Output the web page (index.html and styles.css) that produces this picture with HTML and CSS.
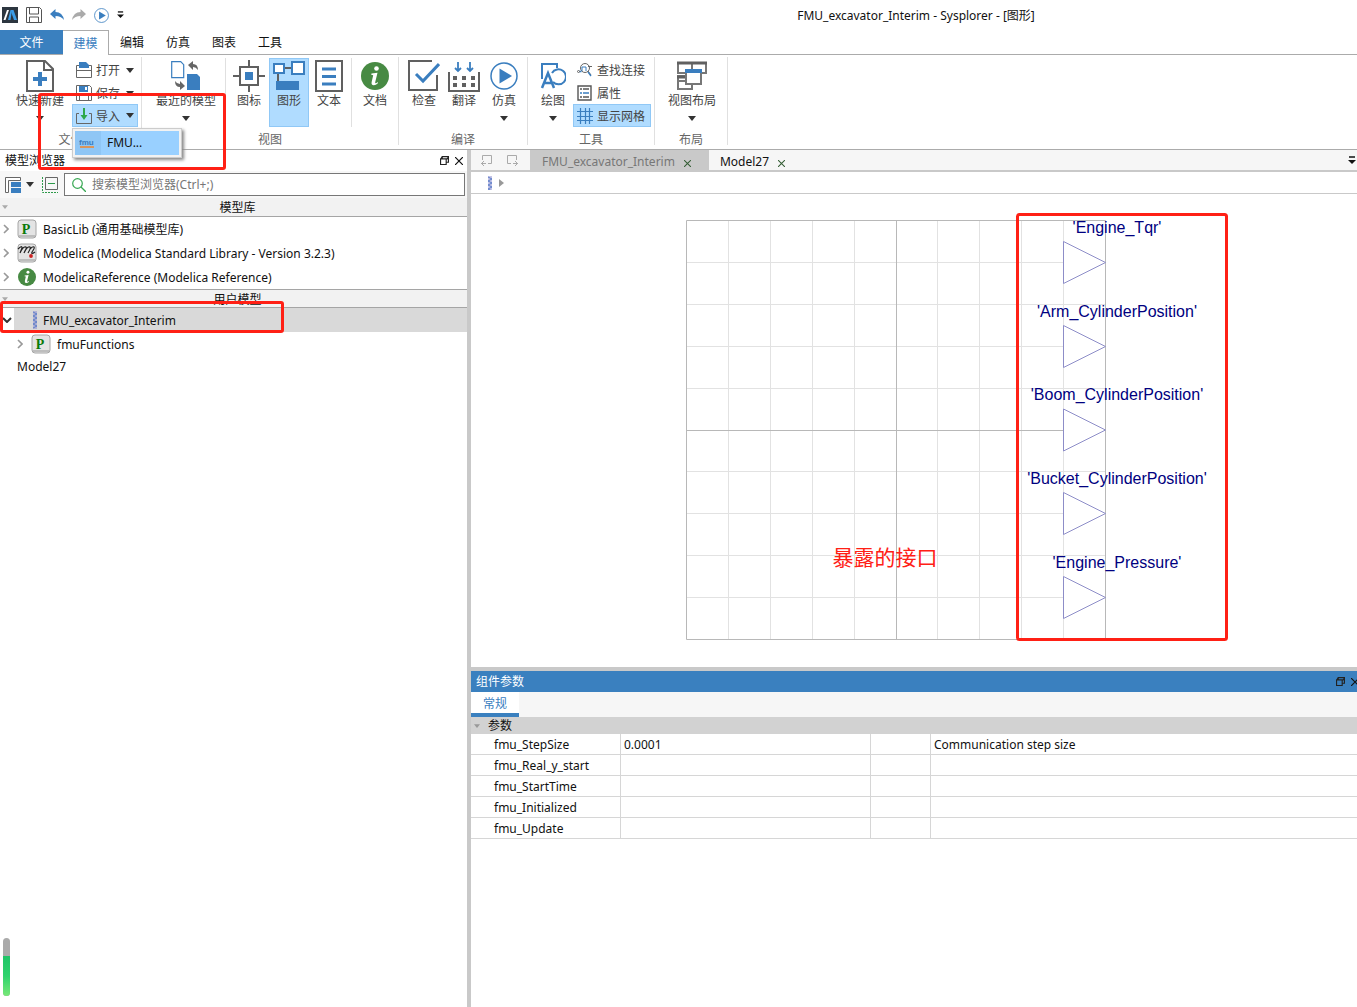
FILE: index.html
```html
<!DOCTYPE html>
<html lang="zh-CN">
<head>
<meta charset="utf-8">
<title>FMU_excavator_Interim - Sysplorer</title>
<link rel="stylesheet" href="styles.css">
</head>
<body>
<svg class="defs" aria-hidden="true">
  <symbol id="package" viewBox="0 0 20 20"><rect x="1" y="1" width="18" height="18" rx="3" fill="#e4e4e4" stroke="#a6a6a6"/><path d="M2 17h16" stroke="#bdbdbd" stroke-width="2"/></symbol>
  <symbol id="info" viewBox="0 0 28 28"><circle cx="14" cy="14" r="14" fill="#478a43"/><circle cx="15.500" cy="6.500" r="2.300" fill="#fff"/><path d="M10.500 11.500l6-.8-2.300 9.500q-.2 1.300.8 1l2-1.200-.3 1.600q-2 1.800-4 1.700-2.800-.3-2-3.600l1.500-6.500-2-.4z" fill="#fff"/></symbol>
  <symbol id="chain" viewBox="0 0 4 18"><path d="M1 0v18M3 0v18" stroke="#8a8ad0"/><path d="M0 1l4 2-4 2 4 2-4 2 4 2-4 2 4 2-4 2" fill="none" stroke="#5f7fc8"/></symbol>
  <symbol id="arrow" viewBox="0 0 8 5"><path d="M0 0h8L4 5z" fill="#333"/></symbol>
  <symbol id="chevron" viewBox="0 0 6 10"><path d="M1 1l4 4-4 4" fill="none" stroke="#999" stroke-width="1.600"/></symbol>
  <symbol id="float" viewBox="0 0 8 8"><path d="M.5 2.500h5v5h-5zM2 2V.5h5.500v5H6M1 2l1-1.500M6 3l1.500-2" fill="none" stroke="#222"/></symbol>
  <symbol id="close" viewBox="0 0 8 8"><path d="M0 0l8 8M8 0L0 8" fill="none" stroke="currentColor" stroke-width="1.200"/></symbol>
  <symbol id="overflow" viewBox="0 0 8 9"><path d="M1 1h6" stroke="#111" stroke-width="1.500"/><path d="M0 4h8L4 8z" fill="#111"/></symbol>
  <symbol id="disk" viewBox="0 0 16 16"><path d="M.5.5h13l2 2v13H.5z" fill="#fff" stroke="#555"/><path d="M3.500 1v6h9V1M3.500 15v-5h9v5" fill="none" stroke="#555"/></symbol>
  <symbol id="play" viewBox="0 0 28 28"><circle cx="14" cy="14" r="13" fill="#fff" stroke="#3a7ebf" stroke-width="1.500"/><path d="M9.500 6.500v15L22 14z" fill="#3a7ebf"/></symbol>
</svg>

<header class="titlebar">
  <nav class="quick">
    <svg width="16" height="16" viewBox="0 0 16 16"><path d="M0 0h16v16H0z" fill="#2c3640"/><path d="M1.500 13L5 3h2L3.500 13z" fill="#fff"/><path d="M9 3h2.500L15 13h-3L9.500 6z" fill="#3b9de8"/><path d="M6 13L8.500 3H10L8.500 13z" fill="#3b9de8"/></svg>
    <button aria-label="保存"><svg width="16" height="16"><use href="#disk"/></svg></button>
    <button aria-label="撤销"><svg width="14" height="12" viewBox="0 0 14 12"><path d="M0 5l5.500-5v3q7 0 8.500 8-3-4-8.500-4v3z" fill="#3a7ebf"/></svg></button>
    <button aria-label="重做"><svg width="14" height="12" viewBox="0 0 14 12"><path d="M14 5L8.500 0v3Q1.500 3 0 11q3-4 8.500-4v3z" fill="#aaa"/></svg></button>
    <button aria-label="仿真"><svg width="15" height="15"><use href="#play"/></svg></button>
    <button aria-label="自定义"><svg width="7" height="8"><use href="#overflow"/></svg></button>
  </nav>
  <h1>FMU_excavator_Interim - Sysplorer - [图形]</h1>
</header>

<nav class="menu">
  <button class="file">文件</button><button class="current">建模</button><button>编辑</button><button>仿真</button><button>图表</button><button>工具</button>
</nav>

<section class="ribbon">
  <div class="group">
    <div class="tools file-tools">
      <button class="big wide"><svg width="28" height="32" viewBox="0 0 28 32"><path d="M1 1h18l8 8v22H1z" fill="#fff" stroke="#606060" stroke-width="2"/><path d="M18 1v9h9" fill="none" stroke="#606060" stroke-width="2"/><path d="M14 12v14M7 19h14" stroke="#3a7ebf" stroke-width="4"/></svg><span>快速新建</span><svg class="drop"><use href="#arrow"/></svg></button>
      <div class="stack">
        <button><svg width="16" height="16" viewBox="0 0 16 16"><path d="M3 3.500H.5v12h15v-12H13M.5 8.500h15" fill="none" stroke="#666"/><path d="M3 6V0h7l3 3v3z" fill="#3a7ebf"/></svg><span>打开</span><svg class="drop"><use href="#arrow"/></svg></button>
        <button><svg width="16" height="16" viewBox="0 0 16 16"><path d="M.5.5h13l2 2v13H.5zM3.500 15v-5h9v5" fill="none" stroke="#666"/><path d="M3 1h9v6H3z" fill="#3a7ebf"/><path d="M9 2h2v3H9z" fill="#fff"/></svg><span>保存</span><svg class="drop"><use href="#arrow"/></svg></button>
        <button class="on"><svg width="16" height="16" viewBox="0 0 16 16"><path d="M3 5.500H.5v10h15v-10H13" fill="none" stroke="#666"/><path d="M8 0v9" stroke="#2da84a" stroke-width="2"/><path d="M4.500 7h7L8 12z" fill="#2da84a"/></svg><span>导入</span><svg class="drop"><use href="#arrow"/></svg></button>
        <menu class="popup"><li><button><svg width="16" height="10" viewBox="0 0 16 10"><text x="0" y="7" class="fmu">fmu</text><path d="M1 9h14" stroke="#f08428" stroke-width="1.500"/></svg><span>FMU...</span></button></li></menu>
      </div>
    </div>
    <h2>文件</h2>
  </div>
  <div class="group">
    <div class="tools">
      <button class="big recent"><svg width="30" height="30" viewBox="0 0 30 30"><path d="M.7.700h9l3 3v13H.7z" fill="#fff" stroke="#3a7ebf" stroke-width="1.200"/><path d="M16 13h10l3 3v13H16z" fill="#3a7ebf"/><path d="M17 4l5-4v3q5 0 5 6-2-3-5-3v3zM14 25l-5 4v-3q-5 0-5-6 2 3 5 3v-3z" fill="#666"/></svg><span>最近的模型</span><svg class="drop"><use href="#arrow"/></svg></button>
      <div class="views">
        <button class="big"><svg width="32" height="32" viewBox="0 0 32 32"><path d="M7 7h18v18H7zM16 0v7M16 25v7M0 16h7M25 16h7" fill="none" stroke="#606060" stroke-width="2"/><path d="M12 12h8v8h-8z" fill="#3a7ebf"/></svg><span>图标</span></button>
        <button class="big on"><svg width="32" height="32" viewBox="0 0 32 32"><path d="M11 8h8M5 12v9" stroke="#606060" stroke-width="2"/><path d="M1 4h10v9H1zM19 2h12v12H19z" fill="#fff" stroke="#3a7ebf" stroke-width="2"/><path d="M3 21h23v9H3z" fill="#3a7ebf"/></svg><span>图形</span></button>
        <button class="big"><svg width="28" height="32" viewBox="0 0 28 32"><path d="M1 1h26v30H1z" fill="#fff" stroke="#606060" stroke-width="2"/><path d="M7 9h14M7 16.500h14M7 24h14" stroke="#3a7ebf" stroke-width="3"/></svg><span>文本</span></button>
      </div>
      <button class="big"><svg width="28" height="28"><use href="#info"/></svg><span>文档</span></button>
    </div>
    <h2>视图</h2>
  </div>
  <div class="group">
    <div class="tools">
      <button class="big"><svg width="32" height="32" viewBox="0 0 32 32"><path d="M24 1H1v29h28V15" fill="none" stroke="#606060" stroke-width="2"/><path d="M8 14l7 7L31 4" fill="none" stroke="#3a7ebf" stroke-width="3"/></svg><span>检查</span></button>
      <button class="big"><svg width="32" height="32" viewBox="0 0 32 32"><path d="M1 12v19h30V12" fill="none" stroke="#606060" stroke-width="2"/><path d="M5 16h4v4H5zM14 16h4v4h-4zM23 16h4v4h-4zM5 23h4v4H5zM14 23h4v4h-4zM23 23h4v4h-4z" fill="#606060"/><path d="M10 2v9M7 8l3 3 3-3M22 2v9M19 8l3 3 3-3" fill="none" stroke="#3a7ebf" stroke-width="1.800"/></svg><span>翻译</span></button>
      <button class="big"><svg width="28" height="28"><use href="#play"/></svg><span>仿真</span><svg class="drop"><use href="#arrow"/></svg></button>
    </div>
    <h2>编译</h2>
  </div>
  <div class="group">
    <div class="tools">
      <button class="big"><svg width="26" height="28" viewBox="0 0 26 28"><path d="M2 17V2h15v4M12 11a7.500 7.500 0 1 1 1 9" fill="none" stroke="#3a7ebf" stroke-width="2"/><path d="M2 26L8 11l6 15M4 21h8" fill="none" stroke="#3a7ebf" stroke-width="2.500"/></svg><span>绘图</span><svg class="drop"><use href="#arrow"/></svg></button>
      <div class="stack roomy">
        <button><svg width="16" height="16" viewBox="0 0 16 16"><circle cx="8" cy="6" r="4.500" fill="none" stroke="#666"/><path d="M11 9l3 4M11 4.500h4" stroke="#666"/><path d="M1.500 9.500h3M11 10l3 4" fill="none" stroke="#3a7ebf" stroke-width="1.300"/><path d="M5 9V5h4v4" fill="none" stroke="#3a7ebf"/><circle cx="1.500" cy="9.500" r="1" fill="#fff" stroke="#666"/></svg><span>查找连接</span></button>
        <button><svg width="16" height="16" viewBox="0 0 16 16"><path d="M1 1h13v14H1z" fill="none" stroke="#555" stroke-width="1.400"/><path d="M3 4h2M6 4h6M3 12h2M6 12h6" stroke="#555" stroke-width="1.500"/><path d="M3 8h2M6 8h6" stroke="#3a7ebf" stroke-width="1.500"/></svg><span>属性</span></button>
        <button class="on"><svg width="16" height="16" viewBox="0 0 16 16"><path d="M3.500 0v16M8.500 0v16M12.500 0v16M0 3.500h16M0 8.500h16M0 12.500h16" stroke="#3a7ebf" stroke-width="1.200"/></svg><span>显示网格</span></button>
      </div>
    </div>
    <h2>工具</h2>
  </div>
  <div class="group">
    <div class="tools">
      <button class="big wide"><svg width="30" height="30" viewBox="0 0 30 30"><path d="M1 2h28v10H1zM15 2v10M1 15h14v13H1zM1 20h7" fill="#fff" stroke="#777" stroke-width="2"/><path d="M0 2h30M0 16h8" stroke="#606060" stroke-width="3"/><path d="M9 10h15v13H9z" fill="#fff" stroke="#777" stroke-width="2"/><path d="M8 10h17" stroke="#3a7ebf" stroke-width="4"/></svg><span>视图布局</span><svg class="drop"><use href="#arrow"/></svg></button>
    </div>
    <h2>布局</h2>
  </div>
  <div class="mark mark-import"></div>
</section>

<main>
  <aside class="browser">
    <div class="dock-title"><h2>模型浏览器</h2><button aria-label="浮动"><svg width="9" height="9"><use href="#float"/></svg></button><button aria-label="关闭"><svg width="8" height="8"><use href="#close"/></svg></button></div>
    <div class="search-row">
      <button aria-label="视图模式"><svg width="17" height="16" viewBox="0 0 17 16"><path d="M3.500 15.500h-3V.5h15v3h-12z" fill="#fff" stroke="#666"/><path d="M6 5h10v5H6zM6 11h10v5H6z" fill="#3a7ebf"/></svg><svg class="drop"><use href="#arrow"/></svg></button>
      <button aria-label="全部折叠"><svg width="16" height="16" viewBox="0 0 16 16"><path d="M3.500.5h12v12h-12z" fill="none" stroke="#666"/><path d="M6 6.500h7" stroke="#2d9a4a"/><path d="M.5 0v15.500H16" fill="none" stroke="#2d9a4a" stroke-dasharray="2 1"/></svg></button>
      <label class="search"><svg width="14" height="14" viewBox="0 0 14 14"><circle cx="5.500" cy="5.500" r="4.800" fill="none" stroke="#38a853" stroke-width="1.200"/><path d="M9 9l5 5" stroke="#38a853" stroke-width="1.300"/></svg><input type="text" placeholder="搜索模型浏览器(Ctrl+;)" aria-label="搜索模型浏览器"></label>
    </div>
    <h3><svg class="fold" viewBox="0 0 8 5"><path d="M0 0h8L4 5z" fill="#aaa"/></svg><span>模型库</span></h3>
    <ul class="tree">
      <li><svg class="twist"><use href="#chevron"/></svg><svg class="ico" viewBox="0 0 20 20"><use href="#package"/><text x="9" y="15" class="p">P</text></svg><span>BasicLib (通用基础模型库)</span></li>
      <li><svg class="twist"><use href="#chevron"/></svg><svg class="ico" viewBox="0 0 20 20"><use href="#package"/><path d="M1 6q4-4 4-1L3 10q3-7 6-6 1 1-2 6 3-7 6-6 1 1-2 6M13 6q3-3 4-2 1 1-2 5-1 3 3 0" fill="none" stroke="#222" stroke-width="1.200"/><circle cx="14" cy="13" r="1.900" fill="#c22"/></svg><span>Modelica (Modelica Standard Library - Version 3.2.3)</span></li>
      <li><svg class="twist"><use href="#chevron"/></svg><svg class="ico"><use href="#info" x="1" y="1" width="18" height="18"/></svg><span>ModelicaReference (Modelica Reference)</span></li>
    </ul>
    <h3 class="user"><svg class="fold" viewBox="0 0 8 5"><path d="M0 0h8L4 5z" fill="#aaa"/></svg><span>用户模型</span></h3>
    <ul class="tree">
      <li class="selected"><svg class="open" viewBox="0 0 10 6"><path d="M1 1l4 4 4-4" fill="none" stroke="#333" stroke-width="2"/></svg><div class="fill"><svg width="4" height="18"><use href="#chain"/></svg><span>FMU_excavator_Interim</span></div><div class="mark mark-model"></div></li>
      <li class="child"><svg class="twist"><use href="#chevron"/></svg><svg class="ico" viewBox="0 0 20 20"><use href="#package"/><text x="9" y="15" class="p">P</text></svg><span>fmuFunctions</span></li>
      <li class="plain"><span>Model27</span></li>
    </ul>
    <div class="meter"><div></div></div>
  </aside>

  <section class="work">
    <nav class="docs">
      <div class="history"><button aria-label="后退"><svg width="11" height="11" viewBox="0 0 11 11"><path d="M1.500 5V.5h9v8H7M5 8.500H0M3 6L.5 8.500 3 11" fill="none" stroke="#aaa"/></svg></button><button aria-label="前进"><svg width="11" height="11" viewBox="0 0 11 11"><path d="M9.500 5V.5h-9v8H4M6 8.500h5M8 6l2.500 2.500L8 11" fill="none" stroke="#aaa"/></svg></button></div>
      <button class="doc active"><span>FMU_excavator_Interim</span><svg width="7" height="7"><use href="#close" width="7" height="7"/></svg></button>
      <button class="doc"><span>Model27</span><svg width="7" height="7"><use href="#close" width="7" height="7"/></svg></button>
      <button class="more" aria-label="更多"><svg width="8" height="9"><use href="#overflow"/></svg></button>
    </nav>
    <div class="crumb"><svg width="4" height="14" viewBox="0 0 4 14"><use href="#chain" width="4" height="18"/></svg><svg width="5" height="8" viewBox="0 0 5 8"><path d="M0 0l5 4-5 4z" fill="#999"/></svg></div>
    <div class="canvas">
      <svg width="542" height="430" viewBox="686 212 542 430">
        <path class="grid" d="M728.500 220v419M770.500 220v419M812.500 220v419M854.500 220v419M937.500 220v419M979.500 220v419M1021.500 220v419M1063.500 220v419M686 262.500h419M686 304.500h419M686 346.500h419M686 388.500h419M686 471.500h419M686 513.500h419M686 555.500h419M686 597.500h419"/>
        <path class="axis" d="M686.500 220.500h419v419h-419zM896.500 220v419M686 430.500h419"/>
        <path class="port" d="M1063.500 241.500v42l42-21zM1063.500 325.500v42l42-21zM1063.500 409v42l42-21zM1063.500 492.500v42l42-21zM1063.500 576.500v42l42-21z"/>
        <g class="port-name"><text x="1117" y="233">'Engine_Tqr'</text><text x="1117" y="317">'Arm_CylinderPosition'</text><text x="1117" y="400">'Boom_CylinderPosition'</text><text x="1117" y="484">'Bucket_CylinderPosition'</text><text x="1117" y="568">'Engine_Pressure'</text></g>
        <rect class="frame" x="1017.500" y="214.500" width="209" height="425" rx="2"/>
        <text class="note" x="885" y="565">暴露的接口</text>
      </svg>
    </div>
    <section class="params">
      <div class="params-title"><h2>组件参数</h2><button aria-label="浮动"><svg width="9" height="9"><use href="#float"/></svg></button><button aria-label="关闭"><svg width="8" height="8"><use href="#close"/></svg></button></div>
      <div class="params-tabs"><button>常规</button></div>
      <h3><svg class="fold" viewBox="0 0 8 5"><path d="M0 0h8L4 5z" fill="#999"/></svg><span>参数</span></h3>
      <table>
        <colgroup><col class="c-name"><col class="c-value"><col class="c-unit"><col></colgroup>
        <tr><th scope="row">fmu_StepSize</th><td>0.0001</td><td></td><td>Communication step size</td></tr>
        <tr><th scope="row">fmu_Real_y_start</th><td></td><td></td><td></td></tr>
        <tr><th scope="row">fmu_StartTime</th><td></td><td></td><td></td></tr>
        <tr><th scope="row">fmu_Initialized</th><td></td><td></td><td></td></tr>
        <tr><th scope="row">fmu_Update</th><td></td><td></td><td></td></tr>
      </table>
    </section>
  </section>
</main>
</body>
</html>
```
FILE: styles.css
```css
* { box-sizing: border-box; }
body {
  margin: 0;
  min-height: 100vh;
  display: flex;
  flex-direction: column;
  font: 12px/16px "Noto Sans", "Noto Sans CJK SC", sans-serif;
  color: #111;
  background: #fff;
  overflow-x: hidden;
}
button {
  font: inherit;
  color: inherit;
  background: none;
  border: 0;
  padding: 0;
  display: flex;
  align-items: center;
}
h1, h2, h3, ul, menu { margin: 0; padding: 0; font: inherit; list-style: none; }
svg { flex: none; display: block; }
.defs { position: absolute; width: 0; height: 0; }
.drop { width: 8px; height: 5px; }

.titlebar { height: 30px; display: flex; align-items: center; }
.quick { width: 475px; padding-left: 2px; display: flex; align-items: center; gap: 8px; }
.titlebar h1 { flex: 1; padding-top: 2px; text-align: center; white-space: nowrap; }

.menu { height: 25px; display: flex; border-bottom: 1px solid #ababab; }
.menu button { width: 46px; padding-top: 2px; justify-content: center; }
.menu .file { width: 63px; background: #3a80bf; color: #fff; }
.menu .current { height: 25px; color: #3a80bf; background: #fff; border: 1px solid #ababab; border-bottom: 0; border-left: 0; }

.ribbon { position: relative; height: 95px; display: flex; border-bottom: 1px solid #ababab; color: #444; }
.group { display: flex; flex-direction: column; border-right: 1px solid #e0e0e0; margin: 2px 0 4px; }
.group h2 { text-align: center; color: #666; line-height: 18px; }
.tools { display: flex; height: 74px; padding: 1px 3px 4px 5px; }
.big { width: 40px; height: 69px; flex-direction: column; white-space: nowrap; border: 1px solid transparent; }
.big > svg:first-child { margin: auto 0; }
.big > span { height: 16px; margin-bottom: 17px; }
.big:has(.drop) > span { margin-bottom: 8px; }
.big .drop { margin: -1px 0 5px; }
.wide { width: 64px; }
.recent { width: 78px; }
.file-tools { padding-left: 8px; }
.on { background: #b0dcff; border: 1px solid #90c8f6; }
.stack { position: relative; display: flex; flex-direction: column; padding-top: 1px; }
.stack > button { height: 23px; padding: 0 3px; gap: 4px; border: 1px solid transparent; white-space: nowrap; }
.stack > button span { padding-top: 2px; }
.stack > button .drop { margin-left: 2px; }
.stack > .on { background: #b0dcff; border-color: #90c8f6; }
.roomy > button { padding-right: 5px; }
.views { display: flex; border: solid #e0e0e0; border-width: 0 1px; padding: 0 2px 0 3px; margin-right: 3px; }

.popup { position: absolute; z-index: 2; top: 70px; left: 0; width: 110px; padding: 2px; background: #f2f2f2; border: 1px solid #ccc; box-shadow: 2px 2px 3px #888; }
.popup button { width: 104px; height: 24px; padding-left: 4px; gap: 12px; color: #111; background: linear-gradient(90deg, #8fc6f5 26px, #99d0ff 26px); }
.fmu { font: bold 8px "Liberation Sans", sans-serif; fill: #3a7ebf; }
.mark { position: absolute; z-index: 3; border: 3px solid #ff2015; border-radius: 3px; pointer-events: none; }
.mark-import { left: 38px; top: 38px; width: 188px; height: 77px; }

main { flex: 1; display: grid; grid-template-columns: 471px minmax(0, 1fr); }
.browser { position: relative; border-right: 4px solid #c9c9c9; }
.dock-title { display: flex; align-items: center; height: 21px; padding: 0 4px 0 5px; gap: 6px; }
.dock-title h2 { flex: 1; }
.search-row { display: flex; align-items: center; gap: 8px; height: 27px; padding: 0 2px 0 5px; background: #f7f7f7; }
.search-row button { gap: 4px; }
.search { flex: 1; display: flex; align-items: center; gap: 6px; height: 23px; margin-left: -2px; padding-left: 7px; border: 1px solid #777; background: #fff; }
.search input { flex: 1; border: 0; outline: 0; padding: 0; font: inherit; background: none; }
.search input::placeholder { color: #777; opacity: 1; }
.fold { width: 6px; height: 4px; }
.browser h3 { display: flex; align-items: center; height: 19px; padding-left: 2px; background: #f2f2f2; border-bottom: 1px solid #a5a5a5; }
.browser h3 span { flex: 1; padding-top: 2px; text-align: center; }
.browser .user { border-top: 1px solid #a5a5a5; overflow: hidden; }
.tree li { display: flex; align-items: center; height: 24px; padding-left: 3px; white-space: nowrap; }
.tree span { padding-top: 2px; }
.twist { width: 6px; height: 10px; margin-right: 8px; }
.ico { width: 20px; height: 20px; margin-right: 6px; }
.p { font: bold 14px "Liberation Serif", serif; fill: #0a7a0a; text-anchor: middle; }
.tree .selected { position: relative; padding-left: 2px; }
.open { width: 10px; height: 6px; margin-right: 2px; }
.fill { flex: 1; height: 24px; display: flex; align-items: center; gap: 6px; padding-left: 19px; background: #d9d9d9; }
.mark-model { left: 0; top: -7px; width: 284px; height: 32px; }
.tree .child { padding-left: 17px; }
.tree .plain { height: 19px; padding-left: 17px; }
.meter { position: absolute; left: 3px; bottom: 11px; width: 7px; height: 58px; padding-top: 18px; border-radius: 4px; overflow: hidden; background: #aaa; }
.meter div { height: 40px; background: linear-gradient(#20c468, #2fd36d 50%, #78e878); }

.work { display: flex; flex-direction: column; }
.docs { display: flex; height: 22px; background: #f6f6f6; border-bottom: 2px solid #c9c9c9; }
.history { display: flex; gap: 15px; width: 59px; padding-left: 10px; }
.doc { padding: 3px 19px 0 11px; gap: 9px; color: #111; }
.doc svg { color: #355e35; margin-top: 3px; }
.active { padding: 3px 18px 0 12px; color: #777; background: #c9c9c9; }
.more { margin-left: auto; padding-right: 1px; }
.crumb { height: 22px; display: flex; align-items: center; gap: 7px; padding-left: 17px; border-bottom: 1px solid #c9c9c9; }
.canvas { flex: 1; padding: 18px 0 24px 215px; }
.grid { stroke: #e2e2e2; fill: none; }
.axis { stroke: #b8b8b8; fill: none; }
.port { stroke: #8d8dc8; fill: #fff; }
.port-name { font: 16px "Liberation Sans", sans-serif; fill: #000080; text-anchor: middle; }
.frame { fill: none; stroke: #ff2015; stroke-width: 3; }
.note { font: 21px "Noto Sans CJK SC", sans-serif; fill: #ff2015; text-anchor: middle; }

.params { min-height: 340px; border-top: 4px solid #c9c9c9; }
.params-title { display: flex; align-items: center; height: 21px; gap: 6px; padding-left: 5px; background: #3a80bf; }
.params-title h2 { flex: 1; color: #fff; }
.params-title button:last-child { margin-right: -2px; }
.params-tabs { height: 25px; background: #f6f6f6; display: flex; }
.params-tabs button { width: 48px; padding-top: 2px; justify-content: center; color: #3a80bf; background: #fff; border-bottom: 4px solid #3a80bf; }
.params h3 { display: flex; align-items: center; gap: 8px; height: 17px; padding-left: 3px; background: #d2d2d2; }
table { width: 100%; table-layout: fixed; border-collapse: separate; border-spacing: 0; }
.c-name { width: 150px; }
.c-value { width: 250px; }
.c-unit { width: 60px; }
th, td { height: 21px; padding: 2px 3px 0; font-weight: normal; text-align: left; border: solid #d6d6d6; border-width: 0 1px 1px 0; }
th { padding-left: 23px; }
td:last-child { border-right: 0; }
```
